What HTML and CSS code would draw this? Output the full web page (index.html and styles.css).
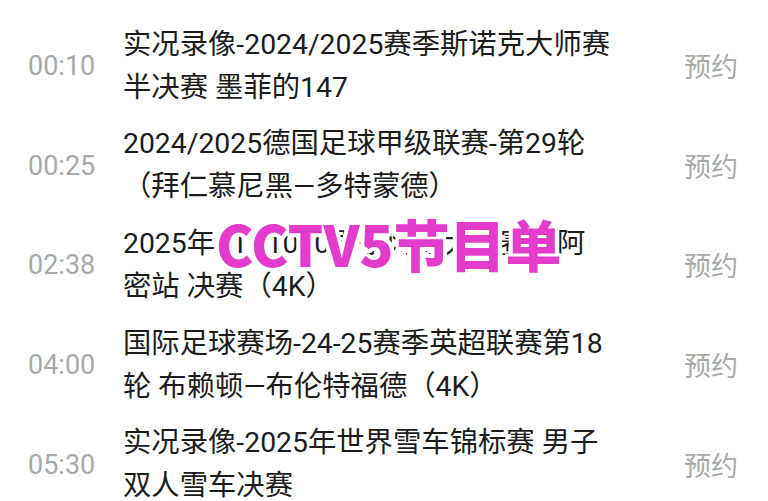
FILE: index.html
```html
<!DOCTYPE html>
<html lang="zh-CN">
<head>
<meta charset="utf-8">
<title>CCTV5节目单</title>
<link rel="stylesheet" href="styles.css">
</head>
<body>
<div class="schedule">
  <div class="row">
    <div class="time">00:10</div>
    <div class="title">实况录像-2024/2025赛季斯诺克大师赛<br>半决赛 墨菲的147</div>
    <div class="action">预约</div>
  </div>
  <div class="row">
    <div class="time">00:25</div>
    <div class="title">2024/2025德国足球甲级联赛-第29轮<br>（拜仁慕尼黑—多特蒙德）</div>
    <div class="action">预约</div>
  </div>
  <div class="row">
    <div class="time">02:38</div>
    <div class="title">2025年ATP1000男子网球大师赛迈阿<br>密站 决赛（4K）</div>
    <div class="action">预约</div>
  </div>
  <div class="row">
    <div class="time">04:00</div>
    <div class="title">国际足球赛场-24-25赛季英超联赛第18<br>轮 布赖顿—布伦特福德（4K）</div>
    <div class="action">预约</div>
  </div>
  <div class="row">
    <div class="time">05:30</div>
    <div class="title">实况录像-2025年世界雪车锦标赛 男子<br>双人雪车决赛</div>
    <div class="action">预约</div>
  </div>
  <div class="watermark">CCTV5节目单</div>
</div>
</body>
</html>
```

FILE: styles.css
```css
html, body {
  margin: 0;
  padding: 0;
  background: #ffffff;
  overflow: hidden;
}

body {
  font-family: "Roboto", "Noto Sans CJK SC", sans-serif;
  width: 768px;
  height: 501px;
  text-autospace: no-autospace;
}

.schedule {
  position: relative;
  padding-top: 16px;
}

.row {
  display: grid;
  grid-template-columns: 95px 1fr auto;
  align-items: center;
  padding: 6.8px 30px 6.8px 28px;
}

.time {
  font-size: 27px;
  color: #a8a8a8;
  line-height: 43px;
  padding-top: 2px;
}

.title {
  font-size: 28.35px;
  line-height: 43px;
  color: #1c1c1c;
  white-space: nowrap;
}

.action {
  font-family: "Noto Sans CJK SC", sans-serif;
  font-size: 27px;
  color: #a9a9a9;
  line-height: 43px;
}

.watermark {
  position: absolute;
  left: 216px;
  top: 215px;
  font-family: "Noto Sans CJK SC", sans-serif;
  font-weight: 900;
  font-size: 56px;
  line-height: 1;
  color: #e33bcb;
  text-shadow:
    4px 0 0 #fff, -4px 0 0 #fff, 0 4px 0 #fff, 0 -4px 0 #fff,
    3px 3px 0 #fff, -3px 3px 0 #fff, 3px -3px 0 #fff, -3px -3px 0 #fff,
    2px 0 0 #fff, -2px 0 0 #fff, 0 2px 0 #fff, 0 -2px 0 #fff;
}
```
